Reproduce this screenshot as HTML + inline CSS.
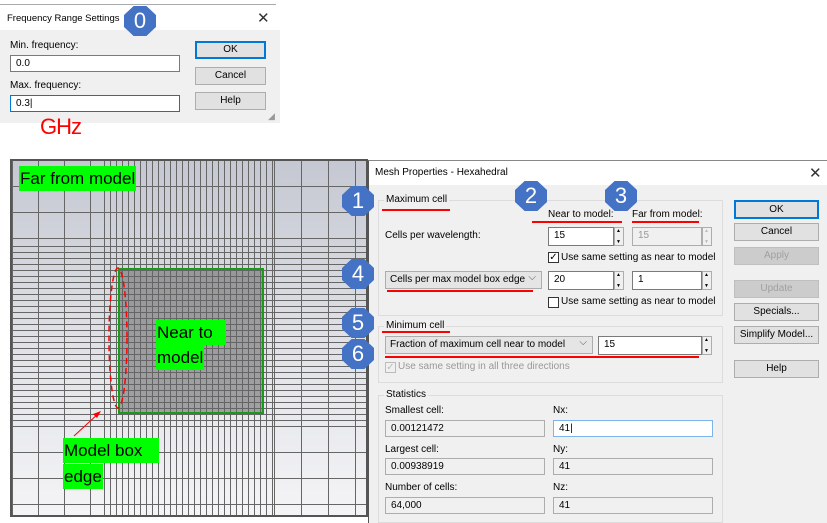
<!DOCTYPE html>
<html><head><meta charset="utf-8"><style>
*{box-sizing:border-box;margin:0;padding:0}
body{width:827px;height:523px;position:relative;overflow:hidden;background:#fff;font-family:"Liberation Sans",sans-serif;font-size:10px;color:#000}
.a{position:absolute}
.t{position:absolute;font-size:10px;white-space:nowrap}
.box{position:absolute;background:#fff;border:1px solid #7a7a7a;font-size:10px;padding:2px 0 0 5px}
.ro{background:#f0f0f0;border-color:#adadad}
.btn{position:absolute;background:#e1e1e1;border:1px solid #adadad;text-align:center;font-size:10px;line-height:15px}
.dis{color:#a0a0a0;background:#ccc;border-color:#bfbfbf}
.grp{position:absolute;border:1px solid #dcdcdc}
.red{position:absolute;height:2px;background:#f00}
.spin{position:absolute;width:10px;border:1px solid #adadad;background:#f0f0f0}
.spin:before{content:"▲";position:absolute;top:0;left:1px;font-size:5px}
.spin:after{content:"▼";position:absolute;bottom:0;left:1px;font-size:5px}
.cb{position:absolute;width:11px;height:11px;border:1px solid #333;background:#fff;font-size:10px;line-height:9px;text-align:center}
.dd{position:absolute;background:#e5e5e5;border:1px solid #adadad;font-size:10px;padding:2px 0 0 4px}
.dd:after{content:"⌵";position:absolute;right:5px;top:0;font-size:10px;color:#555}
.bd{position:absolute;width:32px;height:30px;background:#4472c4;color:#fff;font-size:22px;text-align:center;line-height:30px;clip-path:polygon(30% 0,70% 0,100% 30%,100% 70%,70% 100%,30% 100%,0 70%,0 30%)}
.g{position:absolute;background:#00ff00;font-size:17px;line-height:25px;padding:0 1px}
</style></head><body>

<div class="a" style="left:0;top:4px;width:276px;height:1px;background:#aaa"></div>
<div class="a" style="left:0;top:30px;width:280px;height:93px;background:#f0f0f0"></div>
<div class="t" style="left:7px;top:13px;font-size:9.5px">Frequency Range Settings</div>
<div class="t" style="left:257px;top:9px;font-size:15px;color:#333">✕</div>
<div class="t" style="left:10px;top:40px">Min. frequency:</div>
<div class="box" style="left:10px;top:55px;width:170px;height:17px">0.0</div>
<div class="t" style="left:10px;top:80px">Max. frequency:</div>
<div class="box" style="left:10px;top:95px;width:170px;height:17px;border-color:#0078d7">0.3|</div>
<div class="btn" style="left:195px;top:41px;width:71px;height:18px;border:2px solid #0078d7;line-height:13px">OK</div>
<div class="btn" style="left:195px;top:67px;width:71px;height:18px">Cancel</div>
<div class="btn" style="left:195px;top:92px;width:71px;height:18px">Help</div>
<div class="t" style="left:268px;top:111px;color:#999;font-size:9px">◢</div>
<div class="t" style="left:40px;top:114px;color:#f00;font-size:22px;font-weight:normal;letter-spacing:-1px">GHz</div>
<div class="bd" style="left:124px;top:6px">0</div>

<div class="a" style="left:10px;top:159px;width:358px;height:358px;background:linear-gradient(#c5c8d2,#dfe1e6 50%,#f4f4f6);border:2px solid #555;overflow:hidden">
 <div class="a" style="left:0;top:0;width:92px;height:356px;background:repeating-linear-gradient(90deg,#666 0 1px,transparent 1px 26px)"></div>
 <div class="a" style="left:92px;top:0;width:170px;height:356px;background:repeating-linear-gradient(90deg,#666 0 1px,transparent 1px 6px)"></div>
 <div class="a" style="left:262px;top:0;width:94px;height:356px;background:repeating-linear-gradient(90deg,#666 0 1px,transparent 1px 27px)"></div>
 <div class="a" style="left:0;top:0;width:356px;height:85px;background:repeating-linear-gradient(180deg,transparent 0 25px,#666 25px 26px)"></div>
 <div class="a" style="left:0;top:85px;width:356px;height:180px;background:repeating-linear-gradient(180deg,#666 0 1px,transparent 1px 6px)"></div>
 <div class="a" style="left:0;top:265px;width:356px;height:91px;background:repeating-linear-gradient(180deg,#666 0 1px,transparent 1px 26px)"></div>
 <div class="a" style="left:106px;top:107px;width:146px;height:146px;background:rgba(100,100,100,.55);border:2px solid #1a9a1a"></div>
</div>
<div class="g" style="left:19px;top:166px">Far from model</div>
<div class="g" style="left:156px;top:320px;width:70px">Near to</div>
<div class="g" style="left:156px;top:345px">model</div>
<div class="g" style="left:63px;top:438px;width:96px">Model box</div>
<div class="g" style="left:63px;top:464px">edge</div>
<svg class="a" style="left:0;top:0" width="370" height="523"><ellipse cx="118" cy="338" rx="9" ry="70" fill="none" stroke="#f00" stroke-width="1.5" stroke-dasharray="6,4"/><line x1="74" y1="436" x2="99" y2="413" stroke="#f00"/><polygon points="101,411 93,414 97,418" fill="#f00"/></svg>

<div class="a" style="left:368px;top:160px;width:459px;height:363px;background:#f0f0f0;border-left:1px solid #555;border-top:1px solid #888"></div>
<div class="a" style="left:369px;top:161px;width:458px;height:24px;background:#fff"></div>
<div class="t" style="left:375px;top:167px">Mesh Properties - Hexahedral</div>
<div class="t" style="left:809px;top:164px;font-size:15px;color:#333">✕</div>

<div class="grp" style="left:378px;top:200px;width:345px;height:116px"></div>
<div class="t" style="left:384px;top:194px;background:#f0f0f0;padding:0 2px">Maximum cell</div>
<div class="red" style="left:382px;top:209px;width:68px"></div>
<div class="t" style="left:548px;top:209px">Near to model:</div>
<div class="red" style="left:532px;top:221px;width:90px"></div>
<div class="t" style="left:632px;top:209px">Far from model:</div>
<div class="red" style="left:632px;top:221px;width:67px"></div>
<div class="t" style="left:385px;top:230px">Cells per wavelength:</div>
<div class="box" style="left:548px;top:227px;width:66px;height:19px">15</div><div class="spin" style="left:614px;top:227px;height:19px"></div>
<div class="box ro" style="left:632px;top:227px;width:70px;height:19px;color:#999">15</div><div class="spin" style="left:702px;top:227px;height:19px;color:#bbb"></div>
<div class="cb" style="left:548px;top:252px">✓</div><div class="t" style="left:561px;top:252px">Use same setting as near to model</div>
<div class="dd" style="left:385px;top:271px;width:157px;height:18px">Cells per max model box edge</div>
<div class="red" style="left:387px;top:290px;width:146px"></div>
<div class="box" style="left:548px;top:271px;width:66px;height:19px">20</div><div class="spin" style="left:614px;top:271px;height:19px"></div>
<div class="box" style="left:632px;top:271px;width:70px;height:19px">1</div><div class="spin" style="left:702px;top:271px;height:19px"></div>
<div class="cb" style="left:548px;top:297px"></div><div class="t" style="left:561px;top:296px">Use same setting as near to model</div>

<div class="grp" style="left:378px;top:326px;width:345px;height:57px"></div>
<div class="t" style="left:384px;top:320px;background:#f0f0f0;padding:0 2px">Minimum cell</div>
<div class="red" style="left:382px;top:331px;width:68px"></div>
<div class="dd" style="left:385px;top:336px;width:208px;height:18px">Fraction of maximum cell near to model</div>
<div class="box" style="left:598px;top:336px;width:104px;height:19px">15</div><div class="spin" style="left:702px;top:336px;height:19px"></div>
<div class="red" style="left:385px;top:356px;width:314px"></div>
<div class="cb" style="left:385px;top:362px;border-color:#bbb;color:#bbb;background:#f0f0f0">✓</div><div class="t" style="left:398px;top:361px;color:#999">Use same setting in all three directions</div>

<div class="grp" style="left:378px;top:395px;width:345px;height:128px"></div>
<div class="t" style="left:384px;top:389px;background:#f0f0f0;padding:0 2px">Statistics</div>
<div class="t" style="left:385px;top:405px">Smallest cell:</div><div class="t" style="left:553px;top:405px">Nx:</div>
<div class="box ro" style="left:385px;top:420px;width:160px;height:17px">0.00121472</div>
<div class="box" style="left:553px;top:420px;width:160px;height:17px;border-color:#7eb4ea">41|</div>
<div class="t" style="left:385px;top:444px">Largest cell:</div><div class="t" style="left:553px;top:444px">Ny:</div>
<div class="box ro" style="left:385px;top:458px;width:160px;height:17px">0.00938919</div>
<div class="box ro" style="left:553px;top:458px;width:160px;height:17px">41</div>
<div class="t" style="left:385px;top:482px">Number of cells:</div><div class="t" style="left:553px;top:482px">Nz:</div>
<div class="box ro" style="left:385px;top:497px;width:160px;height:17px">64,000</div>
<div class="box ro" style="left:553px;top:497px;width:160px;height:17px">41</div>

<div class="btn" style="left:734px;top:200px;width:85px;height:19px;border:2px solid #0078d7;line-height:15px">OK</div>
<div class="btn" style="left:734px;top:223px;width:85px;height:18px">Cancel</div>
<div class="btn dis" style="left:734px;top:247px;width:85px;height:18px">Apply</div>
<div class="btn dis" style="left:734px;top:280px;width:85px;height:18px">Update</div>
<div class="btn" style="left:734px;top:303px;width:85px;height:18px">Specials...</div>
<div class="btn" style="left:734px;top:326px;width:85px;height:18px">Simplify Model...</div>
<div class="btn" style="left:734px;top:360px;width:85px;height:18px">Help</div>

<div class="bd" style="left:342px;top:186px">1</div>
<div class="bd" style="left:515px;top:181px">2</div>
<div class="bd" style="left:605px;top:181px">3</div>
<div class="bd" style="left:342px;top:259px">4</div>
<div class="bd" style="left:342px;top:308px">5</div>
<div class="bd" style="left:342px;top:339px">6</div>
</body></html>
